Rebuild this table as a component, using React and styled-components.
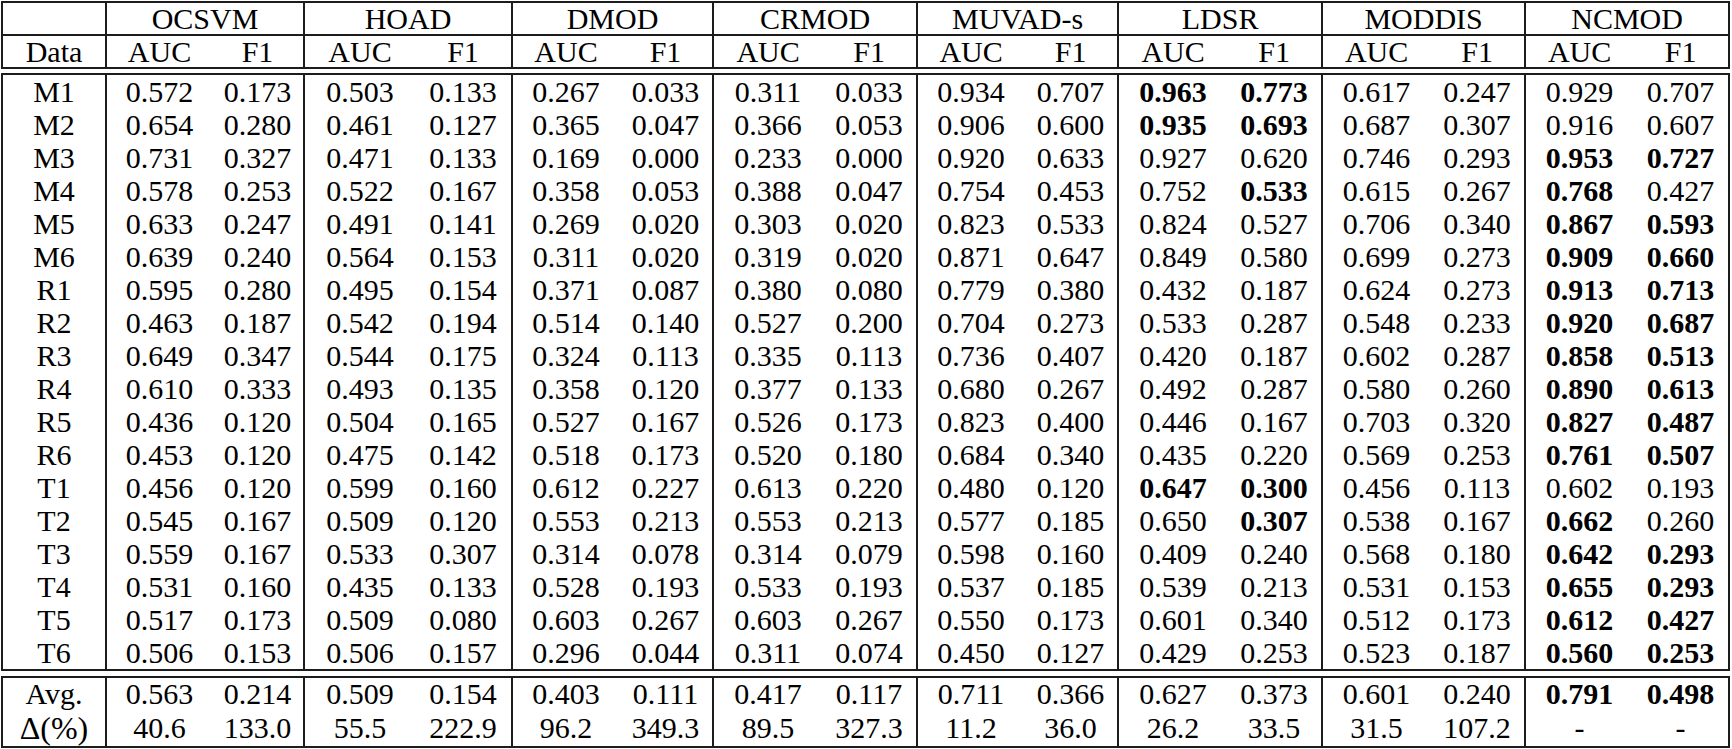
import React from 'react';
import styled, { createGlobalStyle } from 'styled-components';

const GlobalStyle = createGlobalStyle`
  html, body {
    margin: 0;
    padding: 0;
    background: #ffffff;
  }
  body {
    font-family: "Liberation Serif", "Times New Roman", serif;
    color: #000000;
  }
`;

// widths measured off the vertical rules (data column, then one per method)
const DATA_WIDTH = 104;
const GROUP_WIDTHS = [198, 208, 201, 204, 201, 204, 203, 202];

const METHODS = ['OCSVM', 'HOAD', 'DMOD', 'CRMOD', 'MUVAD-s', 'LDSR', 'MODDIS', 'NCMOD'];

// a leading * marks a bold (best) value
const ROWS = [
  ['M1', '0.572 0.173 0.503 0.133 0.267 0.033 0.311 0.033 0.934 0.707 *0.963 *0.773 0.617 0.247 0.929 0.707'],
  ['M2', '0.654 0.280 0.461 0.127 0.365 0.047 0.366 0.053 0.906 0.600 *0.935 *0.693 0.687 0.307 0.916 0.607'],
  ['M3', '0.731 0.327 0.471 0.133 0.169 0.000 0.233 0.000 0.920 0.633 0.927 0.620 0.746 0.293 *0.953 *0.727'],
  ['M4', '0.578 0.253 0.522 0.167 0.358 0.053 0.388 0.047 0.754 0.453 0.752 *0.533 0.615 0.267 *0.768 0.427'],
  ['M5', '0.633 0.247 0.491 0.141 0.269 0.020 0.303 0.020 0.823 0.533 0.824 0.527 0.706 0.340 *0.867 *0.593'],
  ['M6', '0.639 0.240 0.564 0.153 0.311 0.020 0.319 0.020 0.871 0.647 0.849 0.580 0.699 0.273 *0.909 *0.660'],
  ['R1', '0.595 0.280 0.495 0.154 0.371 0.087 0.380 0.080 0.779 0.380 0.432 0.187 0.624 0.273 *0.913 *0.713'],
  ['R2', '0.463 0.187 0.542 0.194 0.514 0.140 0.527 0.200 0.704 0.273 0.533 0.287 0.548 0.233 *0.920 *0.687'],
  ['R3', '0.649 0.347 0.544 0.175 0.324 0.113 0.335 0.113 0.736 0.407 0.420 0.187 0.602 0.287 *0.858 *0.513'],
  ['R4', '0.610 0.333 0.493 0.135 0.358 0.120 0.377 0.133 0.680 0.267 0.492 0.287 0.580 0.260 *0.890 *0.613'],
  ['R5', '0.436 0.120 0.504 0.165 0.527 0.167 0.526 0.173 0.823 0.400 0.446 0.167 0.703 0.320 *0.827 *0.487'],
  ['R6', '0.453 0.120 0.475 0.142 0.518 0.173 0.520 0.180 0.684 0.340 0.435 0.220 0.569 0.253 *0.761 *0.507'],
  ['T1', '0.456 0.120 0.599 0.160 0.612 0.227 0.613 0.220 0.480 0.120 *0.647 *0.300 0.456 0.113 0.602 0.193'],
  ['T2', '0.545 0.167 0.509 0.120 0.553 0.213 0.553 0.213 0.577 0.185 0.650 *0.307 0.538 0.167 *0.662 0.260'],
  ['T3', '0.559 0.167 0.533 0.307 0.314 0.078 0.314 0.079 0.598 0.160 0.409 0.240 0.568 0.180 *0.642 *0.293'],
  ['T4', '0.531 0.160 0.435 0.133 0.528 0.193 0.533 0.193 0.537 0.185 0.539 0.213 0.531 0.153 *0.655 *0.293'],
  ['T5', '0.517 0.173 0.509 0.080 0.603 0.267 0.603 0.267 0.550 0.173 0.601 0.340 0.512 0.173 *0.612 *0.427'],
  ['T6', '0.506 0.153 0.506 0.157 0.296 0.044 0.311 0.074 0.450 0.127 0.429 0.253 0.523 0.187 *0.560 *0.253'],
];

const SUMMARY = [
  ['Avg.', '0.563 0.214 0.509 0.154 0.403 0.111 0.417 0.117 0.711 0.366 0.627 0.373 0.601 0.240 *0.791 *0.498', 32],
  ['Δ(%)', '40.6 133.0 55.5 222.9 96.2 349.3 89.5 327.3 11.2 36.0 26.2 33.5 31.5 107.2 - -', 36],
];

const Page = styled.div`
  display: flex;
  flex-direction: column;
  align-items: flex-start;
  padding: 1px 0 0 1px;
`;

const Block = styled.table`
  border-collapse: separate;
  border-spacing: 0;
  table-layout: fixed;
  border: 2px solid #1c1c1c;
  margin-top: ${({ $gap }) => $gap || 0}px;
  font-size: 30px;
  line-height: 1;
`;

const Row = styled.tr`
  height: ${({ $h }) => $h}px;
`;

const Cell = styled.td`
  padding: 0;
  text-align: center;
  vertical-align: middle;
  white-space: nowrap;
  font-weight: ${({ $bold }) => ($bold ? 700 : 400)};
  border-right: ${({ $edge }) => ($edge ? '2px solid #1c1c1c' : 'none')};
  border-bottom: ${({ $under }) => ($under ? '2px solid #1c1c1c' : 'none')};
  padding-left: ${({ $shift }) => $shift || 0}px;
`;

const Delta = styled.span`
  font-size: 32px;
`;

const Cols = () => (
  <colgroup>
    <col style={{ width: DATA_WIDTH }} />
    {GROUP_WIDTHS.map((w, i) => {
      const a = Math.floor(w / 2);
      return (
        <React.Fragment key={i}>
          <col style={{ width: a }} />
          <col style={{ width: w - a }} />
        </React.Fragment>
      );
    })}
  </colgroup>
);

const tableWidth = DATA_WIDTH + GROUP_WIDTHS.reduce((s, w) => s + w, 0) + 4;

const Values = ({ text }) =>
  text.split(' ').map((v, i) => {
    const bold = v.startsWith('*');
    const last = i === 15;
    return (
      <Cell key={i} $bold={bold} $edge={i % 2 === 1 && !last} $shift={6}>
        {bold ? v.slice(1) : v}
      </Cell>
    );
  });

const App = () => (
  <>
    <GlobalStyle />
    <Page>
      <Block style={{ width: tableWidth }}>
        <Cols />
        <tbody>
          <Row $h={33}>
            <Cell $edge $under />
            {METHODS.map((m, i) => (
              <Cell key={m} colSpan={2} $edge={i < METHODS.length - 1} $under>
                {m}
              </Cell>
            ))}
          </Row>
          <Row $h={31}>
            <Cell $edge>Data</Cell>
            {METHODS.map((m, i) => (
              <React.Fragment key={m}>
                <Cell $shift={6}>AUC</Cell>
                <Cell $edge={i < METHODS.length - 1} $shift={6}>F1</Cell>
              </React.Fragment>
            ))}
          </Row>
        </tbody>
      </Block>

      <Block $gap={4} style={{ width: tableWidth }}>
        <Cols />
        <tbody>
          {ROWS.map(([label, vals]) => (
            <Row key={label} $h={33}>
              <Cell $edge>{label}</Cell>
              <Values text={vals} />
            </Row>
          ))}
        </tbody>
      </Block>

      <Block $gap={5} style={{ width: tableWidth }}>
        <Cols />
        <tbody>
          {SUMMARY.map(([label, vals, h]) => (
            <Row key={label} $h={h}>
              <Cell $edge>
                {label === 'Δ(%)' ? <Delta>{label}</Delta> : label}
              </Cell>
              <Values text={vals} />
            </Row>
          ))}
        </tbody>
      </Block>
    </Page>
  </>
);

export default App;
